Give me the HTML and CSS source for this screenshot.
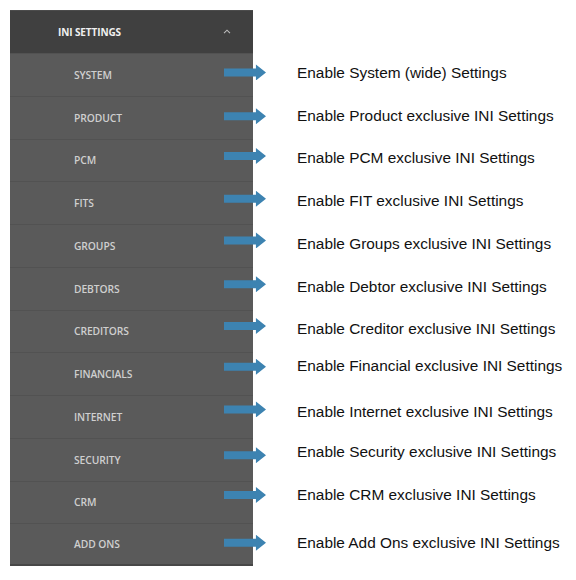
FILE: index.html
```html
<!DOCTYPE html>
<html>
<head>
<meta charset="utf-8">
<link rel="stylesheet" href="styles.css">
</head>
<body>
<div class="page">
  <div class="row head-row">
    <div class="item head">
      <span class="head-label">INI SETTINGS</span>
      <svg class="caret" width="8" height="5" viewBox="0 0 8 5"><path d="M1 4.2 L4 1.2 L7 4.2" fill="none" stroke="#bdbdbd" stroke-width="1.1"/></svg>
    </div>
  </div>
  <div class="row"><div class="item">SYSTEM</div><span class="arrow"></span><div class="note">Enable System (wide) Settings</div></div>
  <div class="row"><div class="item">PRODUCT</div><span class="arrow"></span><div class="note">Enable Product exclusive INI Settings</div></div>
  <div class="row"><div class="item">PCM</div><span class="arrow"></span><div class="note">Enable PCM exclusive INI Settings</div></div>
  <div class="row"><div class="item">FITS</div><span class="arrow"></span><div class="note">Enable FIT exclusive INI Settings</div></div>
  <div class="row"><div class="item">GROUPS</div><span class="arrow"></span><div class="note">Enable Groups exclusive INI Settings</div></div>
  <div class="row"><div class="item">DEBTORS</div><span class="arrow"></span><div class="note">Enable Debtor exclusive INI Settings</div></div>
  <div class="row"><div class="item">CREDITORS</div><span class="arrow"></span><div class="note">Enable Creditor exclusive INI Settings</div></div>
  <div class="row"><div class="item">FINANCIALS</div><span class="arrow"></span><div class="note">Enable Financial exclusive INI Settings</div></div>
  <div class="row"><div class="item">INTERNET</div><span class="arrow"></span><div class="note">Enable Internet exclusive INI Settings</div></div>
  <div class="row"><div class="item">SECURITY</div><span class="arrow"></span><div class="note">Enable Security exclusive INI Settings</div></div>
  <div class="row"><div class="item">CRM</div><span class="arrow"></span><div class="note">Enable CRM exclusive INI Settings</div></div>
  <div class="row last"><div class="item">ADD ONS</div><span class="arrow"></span><div class="note">Enable Add Ons exclusive INI Settings</div></div>
</div>
</body>
</html>
```
FILE: styles.css
```css
html, body {
  margin: 0;
  padding: 0;
  background: #ffffff;
}
.page {
  padding: 10px 0 0 10px;
  display: flex;
  flex-direction: column;
}
.row {
  position: relative;
  display: flex;
  align-items: center;
  height: 42.75px;
}
.item {
  box-sizing: border-box;
  width: 243px;
  height: 100%;
  background: #5a5a5a;
  border-top: 1px solid #525252;
  display: flex;
  align-items: center;
  padding-left: 64px;
  font-family: "Open Sans", sans-serif;
  font-size: 10.3px;
  font-weight: 600;
  color: #cfcfcf;
  letter-spacing: -0.1px;
}
.row.last .item {
  border-bottom: 2px solid #474747;
}
.head-row {
  height: 43px;
}
.item.head {
  background: #404040;
  border-top: 1px solid #4c4c4c;
  padding-left: 48px;
  padding-right: 22px;
  justify-content: space-between;
  color: #f0f0f0;
  font-weight: 700;
  font-size: 10px;
}
.caret {
  margin-top: -2px;
}
.note {
  margin-left: 44px;
  font-family: "Liberation Sans", Arial, sans-serif;
  font-size: 15.4px;
  color: #111111;
  white-space: nowrap;
}
.arrow {
  position: absolute;
  left: 214px;
  top: 50%;
  width: 42px;
  height: 16px;
  margin-top: -9px;
  background: #3d83b1;
  clip-path: polygon(0 25%, 76% 25%, 76% 0, 100% 50%, 76% 100%, 76% 75%, 0 75%);
}
.row:nth-child(2) .arrow { margin-top: -10px; }
.row:nth-child(2) .note { margin-top: -2px; }
.row:nth-child(3) .note { margin-top: -3px; }
.row:nth-child(4) .arrow { margin-top: -12px; }
.row:nth-child(4) .note { margin-top: -3px; }
.row:nth-child(5) .arrow { margin-top: -12px; }
.row:nth-child(5) .note { margin-top: -3px; }
.row:nth-child(6) .arrow { margin-top: -13px; }
.row:nth-child(6) .note { margin-top: -3px; }
.row:nth-child(7) .arrow { margin-top: -12px; }
.row:nth-child(7) .note { margin-top: -3px; }
.row:nth-child(8) .arrow { margin-top: -13px; }
.row:nth-child(8) .note { margin-top: -3px; }
.row:nth-child(9) .arrow { margin-top: -15px; }
.row:nth-child(9) .note { margin-top: -16px; }
.row:nth-child(10) .arrow { margin-top: -15px; }
.row:nth-child(10) .note { margin-top: -9px; }
.row:nth-child(11) .arrow { margin-top: -12px; }
.row:nth-child(11) .note { margin-top: -15px; }
.row:nth-child(12) .arrow { margin-top: -15px; }
.row:nth-child(12) .note { margin-top: -14px; }
.row:nth-child(13) .arrow { margin-top: -10px; }
.row:nth-child(13) .note { margin-top: -4px; }
```
